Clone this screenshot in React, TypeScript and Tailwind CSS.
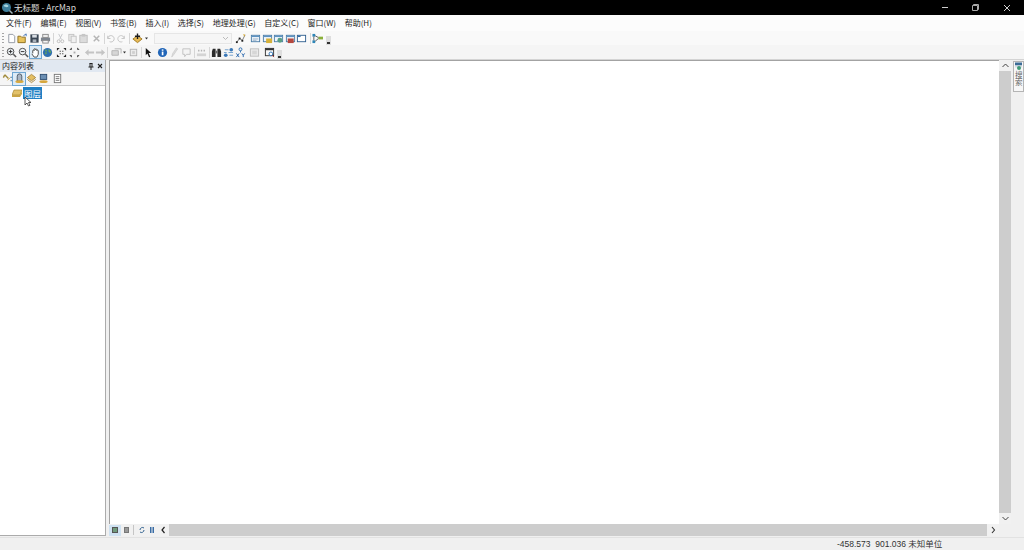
import React from "react";

const cjk = { fontFamily: '"Noto Sans CJK SC", "Liberation Sans", sans-serif' };

function S({ children, w = 12 }: { children: React.ReactNode; w?: number }) {
  return (
    <svg width={(w * 11) / 12} height={11} viewBox={`0 0 ${w} 12`} className="shrink-0">
      {children}
    </svg>
  );
}

const Sep = ({ className = "" }: { className?: string }) => <div className={"w-px h-[11px] bg-[#d6d6d6] shrink-0 " + className} />;
const Grip = () => (
  <div className="w-[2px] h-[11px] ml-[2px] shrink-0 flex flex-col justify-between">
    <div className="h-px bg-[#a5a5a5]" />
    <div className="h-px bg-[#a5a5a5]" />
    <div className="h-px bg-[#a5a5a5]" />
    <div className="h-px bg-[#a5a5a5]" />
  </div>
);
const Overflow = ({ className = "" }: { className?: string }) => (
  <div className={"w-[5px] h-[9px] bg-[#dedede] shrink-0 flex flex-col justify-end items-center pb-px self-end " + className}>
    <div className="w-[3px] h-[2px] bg-[#333]" />
  </div>
);

const Down = () => (
  <svg width="5" height="11" viewBox="0 0 5 11" className="shrink-0">
    <path d="M1 4.500l1.500 2L4 4.500z" fill="#333" />
  </svg>
);

const I = {
  New: () => <S><path d="M3 1.500h4.500l2 2v7H3z" fill="#fff" stroke="#8f96a1" /></S>,
  Open: () => <S><path d="M1 3.500h3l1 1h4v6H1z" fill="#e8c25a" stroke="#8c6d1f" /><path d="M7 3l3-2v2.500" fill="none" stroke="#3a6fb5" /></S>,
  Save: () => <S><rect x="1.500" y="1.500" width="9" height="9" fill="#3a4654" /><rect x="3.500" y="2" width="5" height="3" fill="#d8dde3" /><rect x="4" y="7" width="4" height="3" fill="#aab2bb" /></S>,
  Print: () => <S><rect x="1" y="5" width="10" height="4" fill="#7d858f" /><rect x="3" y="1.500" width="6" height="3.500" fill="#ececec" stroke="#8a8a8a" /><rect x="3" y="8" width="6" height="3" fill="#f5f5f5" stroke="#8a8a8a" /></S>,
  Cut: () => <S><path d="M4 1l3 6M8 1L5 7" stroke="#c4c6c9" fill="none" /><circle cx="4" cy="9" r="1.600" fill="none" stroke="#bcbcbc" /><circle cx="8" cy="9" r="1.600" fill="none" stroke="#bcbcbc" /></S>,
  Copy: () => <S><rect x="2" y="1.500" width="5.500" height="7" fill="#ececec" stroke="#c2c2c2" /><rect x="4.500" y="3.500" width="5.500" height="7" fill="#f0f0f0" stroke="#c2c2c2" /></S>,
  Paste: () => <S><rect x="2" y="2.500" width="8" height="8" fill="#dcdcdc" stroke="#bdbdbd" /><rect x="4" y="1" width="4" height="3" fill="#c6c6c6" /></S>,
  Del: () => <S><path d="M3 3l6 6M9 3l-6 6" stroke="#b5b5b5" strokeWidth="1.600" /></S>,
  Undo: () => <S><path d="M3 6a3.500 3.500 0 1 1 2 3.500M3 3v3h3" fill="none" stroke="#c0c0c0" /></S>,
  Redo: () => <S><path d="M9 6a3.500 3.500 0 1 0-2 3.500M9 3v3H6" fill="none" stroke="#c4c4c4" /></S>,
  Add: () => <S><path d="M6 3l5 3.500-5 4-5-4z" fill="#e6b955" stroke="#a07a25" /><path d="M6 .5v6M3.200 3.500h5.600" stroke="#1c1c1c" strokeWidth="1.500" /></S>,
  Editor: () => <S><path d="M2 10l3-4 3 2 3-6" fill="none" stroke="#777" /><rect x="1" y="9" width="2" height="2" fill="#222" /><rect x="4" y="5" width="2" height="2" fill="#222" /><rect x="7" y="7.500" width="2" height="2" fill="#222" /><path d="M9 1l2 1-1 2z" fill="#d8a520" /></S>,
  Win1: () => <S><rect x="1.500" y="2.500" width="9" height="7" fill="#eef4fa" stroke="#4d7ea8" /><rect x="2" y="3" width="8" height="1.400" fill="#5c92c2" /><path d="M3 6.500h6M3 8h4" stroke="#9db3c9" /></S>,
  Win2: () => <S><rect x="1.500" y="2.500" width="9" height="7" fill="#eef4fa" stroke="#4d7ea8" /><rect x="2" y="3" width="8" height="1.400" fill="#5c92c2" /><rect x="4.500" y="6" width="6.500" height="5" fill="#d6b13a" /></S>,
  Win3: () => <S><rect x="1.500" y="2.500" width="9" height="7" fill="#eef4fa" stroke="#4d7ea8" /><rect x="2" y="3" width="8" height="1.400" fill="#5c92c2" /><circle cx="7.500" cy="7.800" r="2.700" fill="#5a9f86" /></S>,
  Win4: () => <S><rect x="1.500" y="2.500" width="9" height="7" fill="#eef0f4" stroke="#4d7ea8" /><rect x="2" y="3" width="8" height="1.400" fill="#5c92c2" /><rect x="3" y="6" width="6.500" height="5" fill="#b5483f" /></S>,
  Win5: () => <S><rect x="1.500" y="2.500" width="9" height="7" fill="#fff" stroke="#2f5f8f" /><rect x="2" y="3" width="3" height="1.400" fill="#2f6aa5" /></S>,
  Model: () => <S w={14}><rect x="0.500" y="1" width="3" height="3" fill="#2e86b8" /><rect x="0.500" y="8" width="3" height="3" fill="#2e86b8" /><rect x="7" y="4" width="5" height="3" fill="#8ab03a" /><path d="M3.500 3L7 5M3.500 9L7 6M2 4v4" stroke="#555" fill="none" /></S>,
  ZoomIn: () => <S><circle cx="5" cy="5" r="3.600" fill="#eef3f6" stroke="#444" /><path d="M3 5h4M5 3v4" stroke="#2a2a2a" /><path d="M8 8l3 3" stroke="#555" strokeWidth="1.600" /></S>,
  ZoomOut: () => <S><circle cx="5" cy="5" r="3.600" fill="#eef3f6" stroke="#444" /><path d="M3 5h4" stroke="#2a2a2a" /><path d="M8 8l3 3" stroke="#555" strokeWidth="1.600" /></S>,
  Pan: () => <S><path d="M3 7V4c0-1 1.500-1 1.500 0V2.500c0-1 1.500-1 1.500 0V3c0-1 1.500-1 1.500 0v1c0-1 1.500-1 1.500 0v4l-1.500 3H4.500L2 7.500" fill="#fff" stroke="#444" /></S>,
  Globe: () => <S><circle cx="6" cy="6" r="5" fill="#2f70b0" /><path d="M3 3c2-1 3 1 2 2S3 6 3.500 8c1 .5 1-1 2-1M7 2c1 1 3 2 3 4-1 1-2 0-3-1z" fill="#63a35a" /></S>,
  FixIn: () => <S><path d="M1 1h3L1 4zM11 1v3L8 1zM1 11V8l3 3zM11 11H8l3-3z" fill="#222" /><path d="M4 4h1.200v1.200H4zM6.800 4H8v1.200H6.800zM4 6.800h1.200V8H4zM6.800 6.800H8V8H6.800z" fill="#333" /></S>,
  FixOut: () => <S><path d="M3 3H0.500L3 .5zM9 3V.5L11.500 3zM3 9v2.500L.5 9zM9 9h2.500L9 11.500z" fill="#222" /><path d="M5 5h2v2H5z" fill="#aaa" /></S>,
  Back: () => <S><path d="M1 6l4-3.500V5h6v2H5v2.500z" fill="#c4c4c4" /></S>,
  Fwd: () => <S><path d="M11 6L7 2.500V5H1v2h6v2.500z" fill="#c4c4c4" /></S>,
  Layers: () => <S><path d="M1 4h7v5H1z" fill="#d6d6d6" stroke="#b4b4b4" /><path d="M4 2h7v5" fill="none" stroke="#b4b4b4" /></S>,
  Square: () => <S><rect x="2.500" y="2.500" width="7" height="7" fill="#ebebeb" stroke="#b4b4b4" /><rect x="4.500" y="4.500" width="3" height="3" fill="#cfcfcf" /></S>,
  Select: () => <S><path d="M3 1l6 5.500H6.200l1.800 4-1.400.6-1.800-4L3 9z" fill="#111" /></S>,
  Info: () => <S><circle cx="6" cy="6" r="5" fill="#2266b8" /><rect x="5.200" y="5" width="1.800" height="4" fill="#fff" /><rect x="5.200" y="2.600" width="1.800" height="1.500" fill="#fff" /></S>,
  Pencil: () => <S><path d="M3 11l1-4 4-6 1.500 1-4 6z" fill="#dcdcdc" stroke="#c2c2c2" strokeWidth=".6" /></S>,
  Callout: () => <S><path d="M2 2h8v6H6l-2 2.500V8H2z" fill="#f4f4f4" stroke="#c0c0c0" /></S>,
  Measure: () => <S><rect x="1" y="7" width="10" height="3" fill="#d4d4d4" /><path d="M3 3v2M6 3v2M9 3v2" stroke="#b4b4b4" strokeWidth="1.500" /></S>,
  Binoc: () => <S><path d="M2 2h3v9H1V5zM7 2h3l1 3v6H7z" fill="#2a2a2a" /><rect x="5" y="4" width="2" height="3" fill="#666" /></S>,
  GoTo: () => <S><circle cx="3" cy="9" r="2" fill="#3a78b8" /><circle cx="9" cy="3" r="2" fill="#3a78b8" /><path d="M2 3h4M6 6h5M1 6h3M7 9h4" stroke="#6d9ccb" /></S>,
  XY: () => <S><circle cx="6" cy="2.500" r="1.600" fill="none" stroke="#2b6cb0" /><path d="M6 4v2" stroke="#2b6cb0" /><path d="M1.500 7l3 4M4.500 7l-3 4M7.500 7l1.500 2 1.500-2M9 9v2" fill="none" stroke="#1c5ea8" /></S>,
  Cat: () => <S><rect x="1.500" y="2" width="9" height="8" fill="#eaeaea" stroke="#bdbdbd" /><rect x="3.500" y="4" width="5" height="4" fill="#d6d6d6" /></S>,
  Search: () => <S><rect x="1.500" y="1.500" width="9" height="8" fill="#f7f7f7" stroke="#333" /><rect x="1.500" y="1.500" width="9" height="2" fill="#333" /><circle cx="7.500" cy="7.500" r="2" fill="#fff" stroke="#2a6db0" /><path d="M9 9l2 2" stroke="#a33" /></S>,
  ListDraw: () => <S><path d="M3 2l4 4M3 2l-1.500 3" fill="none" stroke="#a08a3a" strokeWidth="1.500" /><path d="M6 8l3-3" stroke="#c9a23a" /><path d="M10 4v1.500M10 7.500V9" stroke="#1f5e96" /></S>,
  ListSource: () => <S><path d="M3.500 9V3.500a2.500 2.500 0 0 1 5 0V9z" fill="#aab6c4" stroke="#4a5666" /><ellipse cx="6" cy="9.500" rx="4.500" ry="1.500" fill="#d8a93f" /></S>,
  ListVis: () => <S><path d="M6 1.500l4.500 3.500L6 8.500 1.500 5z" fill="#e5bf62" stroke="#a8853a" /><path d="M1.500 7L6 10.500 10.500 7" fill="none" stroke="#a8853a" /></S>,
  ListSel: () => <S><rect x="2.500" y="1.500" width="7" height="5.500" fill="#6c8fb3" stroke="#2e4d70" /><ellipse cx="6" cy="9.500" rx="4.500" ry="1.500" fill="#d6a63d" /></S>,
  Opts: () => <S><rect x="2.500" y="1.500" width="7" height="9" fill="#fff" stroke="#777" /><path d="M4 4h4M4 6h4M4 8h4" stroke="#777" /></S>,
};

function Slot({ C, className = "" }: { C: React.ComponentType; className?: string }) {
  return (
    <div className={"w-[11.5px] h-3 flex items-center justify-center shrink-0 " + className}>
      <C />
    </div>
  );
}

const menus = ["文件(F)", "编辑(E)", "视图(V)", "书签(B)", "插入(I)", "选择(S)", "地理处理(G)", "自定义(C)", "窗口(W)", "帮助(H)"];

export default function App() {
  return (
    <div className="w-[1024px] h-[550px] overflow-hidden flex flex-col bg-[#f0f0f0] text-[#222]" style={cjk}>
      {/* Title bar */}
      <div className="h-[15px] bg-black flex items-center text-[#d8d8d8] shrink-0">
        <svg width="12" height="12" viewBox="0 0 12 12" className="ml-px shrink-0">
          <circle cx="5.500" cy="5.500" r="4.500" fill="#3f7f9c" />
          <path d="M2.500 4c1-2 4-2 5 0-1 2-3 1-5 0z" fill="#a7d3dd" />
          <path d="M8.500 8.500l3 3" stroke="#9fb2ba" strokeWidth="1.500" />
        </svg>
        <span className="ml-px text-[8.5px] leading-none whitespace-nowrap">无标题 - ArcMap</span>
        <div className="ml-auto flex items-center">
          <div className="w-[6px] h-px bg-[#cccccc] mr-[24px]" />
          <svg width="7" height="7" viewBox="0 0 7 7" className="mr-[24px]">
            <path d="M.5 1.500h5v5h-5zM1.500 1.500V.5h5v5h-1" fill="none" stroke="#aaaaaa" />
          </svg>
          <svg width="8" height="8" viewBox="0 0 8 8" className="mr-[13px]">
            <path d="M1 1l6 6M7 1L1 7" stroke="#d0d0d0" />
          </svg>
        </div>
      </div>

      {/* Menu bar */}
      <div className="h-4 bg-[#fcfcfc] flex items-center gap-[8.7px] pl-[6px] text-[8px] leading-none whitespace-nowrap shrink-0">
        {menus.map((m) => (
          <span key={m}>{m}</span>
        ))}
      </div>

      {/* Toolbar 1 */}
      <div className="h-[14px] flex items-center bg-[#f9f9f9] shrink-0">
        <Grip />
        <Slot C={I.New} className="ml-[1.5px]" />
        <Slot C={I.Open} />
        <Slot C={I.Save} />
        <Slot C={I.Print} />
        <Sep className="ml-px" />
        <Slot C={I.Cut} className="ml-[1.5px]" />
        <Slot C={I.Copy} />
        <Slot C={I.Paste} />
        <Slot C={I.Del} className="ml-px" />
        <Sep className="ml-[1.5px]" />
        <Slot C={I.Undo} />
        <Slot C={I.Redo} />
        <Sep className="ml-[1.5px]" />
        <Slot C={I.Add} className="ml-[2px]" />
        <Down />
        <div className="ml-[5px] w-[78px] h-[11px] bg-[#f6f6f6] border border-[#e6e6e6] flex items-center justify-end pr-[2px] shrink-0">
          <svg width="7" height="5" viewBox="0 0 7 5"><path d="M1 1l2.500 2.500L6 1" fill="none" stroke="#bbb" /></svg>
        </div>
        <Slot C={I.Editor} className="ml-[3px]" />
        <Slot C={I.Win1} className="ml-[3.75px]" />
        <Slot C={I.Win2} />
        <Slot C={I.Win3} />
        <Slot C={I.Win4} />
        <Slot C={I.Win5} />
        <Sep className="ml-[3px]" />
        <div className="ml-[1px] shrink-0 flex items-center"><I.Model /></div>
        <Overflow className="ml-px" />
      </div>

      {/* Toolbar 2 */}
      <div className="h-[14px] flex items-center bg-[#f5f5f5] shrink-0">
        <Grip />
        <Slot C={I.ZoomIn} className="ml-[1.5px]" />
        <Slot C={I.ZoomOut} className="ml-[0.5px]" />
        <Slot C={I.Pan} className="ml-[0.5px] outline outline-1 outline-[#6ea6d3] bg-[#dcebf7]" />
        <Slot C={I.Globe} className="ml-[0.5px]" />
        <Slot C={I.FixIn} className="ml-[2.25px]" />
        <Slot C={I.FixOut} className="ml-[1.5px]" />
        <Slot C={I.Back} className="ml-[3.5px]" />
        <Slot C={I.Fwd} />
        <Sep className="ml-[0.75px]" />
        <Slot C={I.Layers} className="ml-[2.25px]" />
        <Down />
        <Slot C={I.Square} className="ml-[0.5px]" />
        <Sep className="ml-[2.25px]" />
        <Slot C={I.Select} className="ml-[0.25px]" />
        <Slot C={I.Info} className="ml-[2.5px]" />
        <Slot C={I.Pencil} className="ml-[0.5px]" />
        <Slot C={I.Callout} className="ml-[0.5px]" />
        <Sep className="ml-[2.25px]" />
        <Slot C={I.Measure} className="ml-[0.25px]" />
        <Sep className="ml-[2.25px]" />
        <Slot C={I.Binoc} className="ml-[0.25px]" />
        <Slot C={I.GoTo} className="ml-[0.5px]" />
        <Slot C={I.XY} className="ml-[0.5px]" />
        <Slot C={I.Cat} className="ml-[2.5px]" />
        <Slot C={I.Search} className="ml-[3.5px]" />
        <Overflow className="ml-[2.25px]" />
      </div>

      {/* Body */}
      <div className="flex-1 min-h-0 flex border-t border-[#d4d4d4]">
        {/* TOC */}
        <div className="w-[106px] shrink-0 flex flex-col bg-white border-r border-b border-[#ababab] mb-px">
          <div className="h-[12px] bg-[#e1e8f1] flex items-center pl-[2px] text-[8px] leading-none shrink-0">
            <span>内容列表</span>
            <svg width="6" height="7" viewBox="0 0 6 7" className="ml-auto mr-[3px]">
              <path d="M1.500 .5h3M2 .5v3.500M4 .5v3.500M.5 4h5M3 4v3" fill="none" stroke="#222" />
            </svg>
            <svg width="6" height="6" viewBox="0 0 6 6" className="mr-[2px]"><path d="M1 1l4 4M5 1L1 5" stroke="#222" strokeWidth="1.100" /></svg>
          </div>
          <div className="h-[14px] bg-[#f5f5f5] border-b border-[#c8c8c8] flex items-center pl-[1.25px] shrink-0">
            <Slot C={I.ListDraw} />
            <Slot C={I.ListSource} className="ml-[0.5px] outline outline-1 outline-[#6ea6d3] bg-[#dcebf7]" />
            <Slot C={I.ListVis} className="ml-px" />
            <Slot C={I.ListSel} className="ml-[0.5px]" />
            <Slot C={I.Opts} className="ml-[2.5px]" />
          </div>
          <div className="relative flex items-center pl-[12px] h-[14px]">
            <svg width="10" height="9" viewBox="0 0 10 9" className="shrink-0">
              <path d="M2 1h8L8 6H0z" fill="#e3c26a" stroke="#a98a33" strokeWidth=".7" />
              <path d="M0 6h8l2-4v3L8 8H0z" fill="#c9a445" />
            </svg>
            <span className="ml-px bg-[#1f7fc4] text-white text-[8.5px] leading-none px-[1px] py-[2px]">图层</span>
            <svg width="9" height="12" viewBox="0 0 9 12" className="absolute left-[24px] top-[10px]">
              <path d="M1 1v8l2-2 1.500 3 1.500-.7L4.500 6.500H7z" fill="#fff" stroke="#333" strokeWidth=".8" />
            </svg>
          </div>
        </div>

        {/* Map + scrollbars */}
        <div className="ml-[3px] flex-1 min-w-0 flex flex-col">
          <div className="flex-1 min-h-0 flex">
            <div className="flex-1 bg-white border-l border-t border-[#a3a3a3]" />
            <div className="w-[12px] mr-px bg-[#f1f1f1] flex flex-col items-center shrink-0">
              <svg width="9" height="11" viewBox="0 0 9 11" className="shrink-0"><path d="M1.500 7L4.500 4l3 3" fill="none" stroke="#444" /></svg>
              <div className="flex-1 w-full bg-[#cdcdcd]" />
              <svg width="9" height="11" viewBox="0 0 9 11" className="shrink-0"><path d="M1.500 4l3 3 3-3" fill="none" stroke="#444" /></svg>
            </div>
          </div>
          <div className="h-[12px] mb-px mr-[13px] flex items-center bg-[#f1f1f1] shrink-0">
            <div className="w-[12px] h-[11px] bg-[#cfe2f2] flex items-center justify-center shrink-0">
              <div className="w-[6px] h-[6px] bg-[#6f9a7c] border border-[#555]" />
            </div>
            <div className="w-[10px] h-[11px] flex items-center justify-center shrink-0">
              <div className="w-[5px] h-[6px] bg-[#999] border border-[#777]" />
            </div>
            <div className="ml-[2px] w-px h-[10px] bg-[#c5c5c5] shrink-0" />
            <svg width="8" height="8" viewBox="0 0 8 8" className="ml-[4px] shrink-0"><path d="M2 4a2.500 2.500 0 0 1 4-2M6 4a2.500 2.500 0 0 1-4 2" fill="none" stroke="#30618f" /></svg>
            <svg width="6" height="6" viewBox="0 0 6 6" className="ml-[3px] shrink-0"><path d="M1 0h1.500v6H1zM3.500 0H5v6H3.500z" fill="#3a6da5" /></svg>
            <svg width="6" height="8" viewBox="0 0 6 8" className="ml-[5px] shrink-0"><path d="M4.500 1L2 4l2.500 3" fill="none" stroke="#222" strokeWidth="1.200" /></svg>
            <div className="ml-[3px] flex-1 h-full bg-[#cdcdcd]" />
            <svg width="12" height="8" viewBox="0 0 12 8" className="shrink-0"><path d="M5 1l2.500 3L5 7" fill="none" stroke="#333" strokeWidth="1.100" /></svg>
          </div>
        </div>

        {/* Right dock */}
        <div className="w-[12px] shrink-0 pt-px pl-px">
          <div className="w-[11px] h-[31px] border border-[#b4b4b4] bg-[#f7f7f7] flex flex-col items-center">
            <svg width="9" height="9" viewBox="0 0 9 9" className="shrink-0">
              <rect x="1" y="0.500" width="7" height="3" fill="#3c6b96" />
              <rect x="1" y="3.500" width="7" height="2" fill="#d6dde5" />
              <circle cx="5" cy="6" r="2" fill="#3f9a76" />
            </svg>
            <span className="text-[7.5px] leading-none text-[#666] [writing-mode:vertical-rl]">搜索</span>
          </div>
        </div>
      </div>

      {/* Status bar */}
      <div className="h-[13px] bg-[#f0f0f0] border-t border-[#e2e2e2] flex items-center text-[8.5px] leading-none text-[#333] shrink-0 whitespace-nowrap">
        <span className="ml-[837px]" style={{ fontFamily: '"Liberation Sans", "Noto Sans CJK SC", sans-serif' }}>-458.573&nbsp;&nbsp;901.036 未知单位</span>
      </div>
    </div>
  );
}
